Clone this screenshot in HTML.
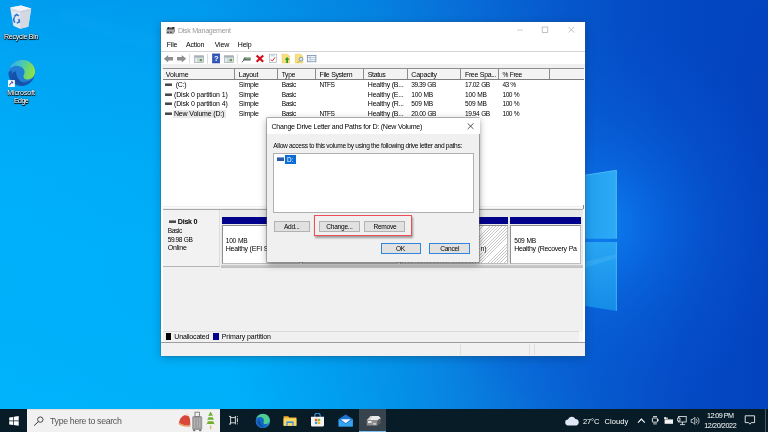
<!DOCTYPE html>
<html><head><meta charset="utf-8"><title>Disk Management</title>
<style>
*{box-sizing:border-box;margin:0;padding:0}
html,body{width:768px;height:432px;overflow:hidden;background:#0e9fe8}
body{position:relative;font-family:"Liberation Sans",sans-serif;font-size:7px;color:#000;letter-spacing:-0.22px;line-height:1}
.abs,.t{position:absolute}
#win,#dlg,#task,.dl{will-change:transform}
#win>*,#dlg>*,#task>*,.dl,.dicon{filter:blur(0.32px)}
.t{white-space:nowrap;line-height:10px;height:10px}
#wall{position:absolute;left:0;top:0;width:768px;height:432px}
/* desktop icons */
.dl{position:absolute;color:#fff;text-align:center;white-space:nowrap;text-shadow:0 0.6px 1px #000,0 0 1.5px rgba(0,0,0,.9),0.5px 0.5px 0.5px rgba(0,0,0,.8);font-size:7.1px;letter-spacing:-0.3px;line-height:9px}
/* main window */
#win{position:absolute;left:161px;top:22px;width:423.5px;height:334.3px;background:#fff;box-shadow:0 0 0 0.5px rgba(60,90,120,.5),0 2px 9px rgba(0,0,0,.22)}
#dlg{position:absolute;left:266.8px;top:118px;width:212.2px;height:143.6px;background:#f0f0f0;box-shadow:0 0 0 0.6px rgba(90,90,90,.7),0 2px 8px rgba(0,0,0,.32),1px 2px 4px rgba(0,0,0,.16)}
.btn{position:absolute;height:11.2px;background:#e1e1e1;border:0.6px solid #b2b2b2;text-align:center;line-height:10px;font-size:6.6px;letter-spacing:-0.25px}
#task{position:absolute;left:0;top:409px;width:768px;height:23px;background:#071c27}
</style></head><body>
<svg id="wall" viewBox="0 0 768 432">
<defs>
<linearGradient id="gb" x1="0" y1="256" x2="768" y2="176" gradientUnits="userSpaceOnUse">
<stop offset="0" stop-color="#00b1fa"/><stop offset="0.28" stop-color="#00adf8"/><stop offset="0.37" stop-color="#02a1f1"/><stop offset="0.5" stop-color="#0590e8"/><stop offset="0.57" stop-color="#0882e1"/><stop offset="0.66" stop-color="#096ed8"/><stop offset="0.76" stop-color="#0759cc"/><stop offset="0.87" stop-color="#0449c4"/><stop offset="1" stop-color="#0441bd"/>
</linearGradient>
<linearGradient id="gv" x1="0" y1="0" x2="0" y2="432" gradientUnits="userSpaceOnUse">
<stop offset="0" stop-color="#0050c8" stop-opacity=".2"/><stop offset="0.15" stop-color="#0050c8" stop-opacity=".11"/><stop offset="0.4" stop-color="#0050c8" stop-opacity=".03"/><stop offset="0.6" stop-color="#0050c8" stop-opacity="0"/>
</linearGradient>
<linearGradient id="gbot" x1="0" y1="300" x2="0" y2="410" gradientUnits="userSpaceOnUse">
<stop offset="0" stop-color="#00c0ff" stop-opacity="0"/><stop offset="1" stop-color="#00c0ff" stop-opacity=".22"/>
</linearGradient>
<linearGradient id="gbm" x1="0" y1="0" x2="420" y2="0" gradientUnits="userSpaceOnUse">
<stop offset="0" stop-color="#fff"/><stop offset="0.55" stop-color="#fff"/><stop offset="1" stop-color="#000"/>
</linearGradient>
<mask id="mbot"><rect width="768" height="432" fill="url(#gbm)"/></mask>
<radialGradient id="glow" cx="598" cy="225" r="200" gradientUnits="userSpaceOnUse">
<stop offset="0" stop-color="#0e84f2" stop-opacity=".95"/><stop offset="0.25" stop-color="#0a70e8" stop-opacity=".72"/><stop offset="0.55" stop-color="#0860dc" stop-opacity=".42"/><stop offset="1" stop-color="#0650d0" stop-opacity="0"/>
</radialGradient>
<linearGradient id="pane" x1="570" y1="0" x2="617" y2="0" gradientUnits="userSpaceOnUse">
<stop offset="0" stop-color="#1a98ee"/><stop offset="1" stop-color="#2eabf5"/>
</linearGradient>
<linearGradient id="pane2" x1="0" y1="242" x2="0" y2="311" gradientUnits="userSpaceOnUse">
<stop offset="0" stop-color="#29a5f4"/><stop offset="1" stop-color="#158ce8"/>
</linearGradient>
</defs>
<rect width="768" height="432" fill="url(#gb)"/>
<rect width="768" height="432" fill="url(#gv)"/>
<rect width="768" height="432" fill="url(#gbot)" mask="url(#mbot)"/>
<polygon points="60,9 175,40 175,60 60,20" fill="#2ab8ff" opacity=".07"/>
<rect width="768" height="432" fill="url(#glow)"/>
<polygon points="560,179 616.7,170 616.7,238.8 560,238.8" fill="url(#pane)"/>
<polygon points="560,242 616.7,242 616.7,311 560,302" fill="url(#pane2)"/>
<path d="M584,175.4 L616.4,170.3 V238.6 M616.4,242 V310.7" stroke="#66ccf9" stroke-width="0.7" fill="none" opacity=".85"/>
<polygon points="584,262 616.7,254 616.7,258 584,268" fill="#5fc4f8" opacity=".25"/>
</svg>

<!-- desktop icons -->
<svg class="abs dicon" style="left:8px;top:4px;width:26px;height:26px" viewBox="0 0 26 26">
<polygon points="2.2,3.4 13,1.6 23.2,4.6 20.3,22.8 12,24.8 5.3,21.8" fill="#e3e7ee"/>
<polygon points="2.2,3.4 13,1.6 23.2,4.6 12.4,7" fill="#f3f4f8"/>
<polygon points="12.4,7 23.2,4.6 20.3,22.8 12,24.8" fill="#d3d8e3"/>
<path d="M4 6 L12.4 8 L22 6" stroke="#c2c8d4" stroke-width="0.6" fill="none"/>
<path d="M6.3 12.6 l2.3-2.2 2.3 1.6 M10.9 14.9 l0.5 3 -2.6 1.2 M6.8 18.6 l-1.3-2.8 1-2.4" stroke="#1f6fd0" stroke-width="1.5" fill="none"/>
</svg>
<div class="dl" style="left:1px;top:32.9px;width:40px">Recycle Bin</div>

<svg class="abs dicon" style="left:6.6px;top:57.7px;width:31px;height:31px" viewBox="0 0 30 30">
<defs>
<linearGradient id="eg1" x1="0" y1="0" x2="1" y2="1"><stop offset="0" stop-color="#2a9fe6"/><stop offset="1" stop-color="#1467c2"/></linearGradient>
<linearGradient id="eg2" x1="0" y1="0.2" x2="1" y2="0.5"><stop offset="0" stop-color="#2fb2ee"/><stop offset="0.4" stop-color="#45c6c0"/><stop offset="0.75" stop-color="#6fd96a"/><stop offset="1" stop-color="#8fe048"/></linearGradient>
</defs>
<circle cx="14.2" cy="14.2" r="12.8" fill="url(#eg1)"/>
<path d="M3 9 C7 1,20 -1,25.5 7.5 C29 13,27 20,20.5 21 C16 21.5,14.5 18,16.5 15.5 C18 13,16 8.5,11 8.5 C7 8.5,4.5 10,3 9Z" fill="url(#eg2)"/>
<path d="M1.6 14 C2.5 8.5,8 6.5,12 8 C15.5 9.3,17.6 12.6,16.5 15.5 C15 18,16 21.5,20.5 21 C23 20.8,25 19.5,26 18.5 C24 24,19 27,14.2 27 C7 27,1 21,1.6 14Z" fill="#207ed4"/>
<path d="M8.5 13 C9 17,11 22,17 25.5 C12 26.5,6.5 23,5 18 C4.4 15.5,6 12.5,8.5 13Z" fill="#1452ad"/>
<path d="M1.6 14 C1 21,7 27,14.2 27 C19 27,24 24,26 18.5 C23 22.5,17.5 24.5,13 23 C7.5 21.5,4 17,4.6 12 C3 12.6,1.8 13,1.6 14Z" fill="#154fa8" opacity=".85"/>
<rect x="1" y="21.4" width="6.6" height="6.6" fill="#fff"/>
<path d="M2.6 26.6 C2.8 24.4,4 23.6,5.4 23.6 M4.2 22.6 L5.8 23.6 L4.6 25" stroke="#1a3f9a" stroke-width="0.9" fill="none"/>
</svg>
<div class="dl" style="left:0.6px;top:89.3px;width:40px;letter-spacing:-0.12px">Microsoft</div>
<div class="dl" style="left:0.6px;top:97.1px;width:40px;letter-spacing:-0.6px">Edge</div>

<div id="win">
<!-- title bar -->
<svg class="abs" style="left:4.6px;top:4.4px;width:9px;height:9px" viewBox="0 0 9 9">
<path d="M1.8 0.9 h6.8 l-0.6 2 h-7.2z" fill="#2b2b2b"/><path d="M0.8 2.9 h7.2 l-0.4 1.6 h-7.4z" fill="#7d7d7d"/><path d="M0.4 4.5 h7.4 v3.4 h-7.4z" fill="#a9a9a9"/><rect x="1.2" y="5.6" width="1.6" height="1.4" fill="#3a3a3a"/><rect x="4.2" y="5.6" width="1.6" height="1.4" fill="#3a3a3a"/><rect x="3" y="1.4" width="3.4" height="0.8" fill="#d8d8d8"/><path d="M7.8 4.5 l0.8-3.2 v4 l-0.8 2.6z" fill="#444"/>
</svg>
<div class="t" style="left:17px;top:3.8px;color:#9a9a9a;font-size:7.1px;letter-spacing:-0.3px">Disk Management</div>
<svg class="abs" style="left:350px;top:0;width:72px;height:18px" viewBox="0 0 72 18">
<path d="M6 8.1 h6" stroke="#b9b9b9" stroke-width="0.7"/>
<rect x="31.2" y="5" width="5.6" height="5.6" fill="none" stroke="#a8a8a8" stroke-width="0.7"/>
<path d="M57.5 4.9 l5.6 5.6 M63.1 4.9 l-5.6 5.6" stroke="#a8a8a8" stroke-width="0.7"/>
</svg>
<!-- menu -->
<div class="t" style="left:5.8px;top:18.2px">File</div>
<div class="t" style="left:25px;top:18.2px">Action</div>
<div class="t" style="left:53.8px;top:18.2px">View</div>
<div class="t" style="left:76.8px;top:18.2px">Help</div>
<div class="abs" style="left:0;top:29.2px;width:423.5px;height:0.7px;background:#d4d4d4"></div>
<!-- toolbar -->
<svg class="abs" style="left:0;top:30px;width:190px;height:13px" viewBox="0 0 190 13">
<path d="M2.8 6.8 l4.4-3.8 v2.1 h4.8 v3.4 h-4.8 v2.1z" fill="#8e8e8e"/>
<path d="M25.2 6.8 l-4.4-3.8 v2.1 h-4.8 v3.4 h4.8 v2.1z" fill="#8e8e8e"/>
<path d="M28.6 2 v9.6" stroke="#c4c4c4" stroke-width="0.6"/>
<rect x="33.6" y="3.8" width="9" height="6.6" fill="#e4ecee" stroke="#8e9ba0" stroke-width="0.6"/><rect x="33.6" y="3.8" width="9" height="1.8" fill="#a3b0b5"/><path d="M37 5.6 v4.8" stroke="#8e9ba0" stroke-width="0.5"/><rect x="38.6" y="6.8" width="2.6" height="2.6" fill="#6a9a58"/>
<path d="M46.5 2 v9.6" stroke="#c4c4c4" stroke-width="0.6"/>
<rect x="51.4" y="1.9" width="7.4" height="9.1" fill="#3458bd" stroke="#203e92" stroke-width="0.5"/><text x="53" y="9.3" font-family="Liberation Sans,sans-serif" font-weight="bold" font-size="7.6" fill="#fff">?</text>
<rect x="63.6" y="3.8" width="9" height="6.6" fill="#e4ecee" stroke="#8e9ba0" stroke-width="0.6"/><rect x="63.6" y="3.8" width="9" height="1.8" fill="#a3b0b5"/><path d="M67 5.6 v4.8" stroke="#8e9ba0" stroke-width="0.5"/><rect x="68.6" y="6.8" width="2.6" height="2.6" fill="#6a9a58"/>
<path d="M76.3 2 v9.6" stroke="#c4c4c4" stroke-width="0.6"/>
<path d="M81 10.4 l2.6-3.4" stroke="#59666b" stroke-width="1"/><path d="M83 5.6 h6.6 v2.8 h-7.4z" fill="#58686e"/><path d="M84.4 6.6 h4.6" stroke="#7dbb5a" stroke-width="1.1"/>
<path d="M95.6 3.4 l6.6 6.4 M102.2 3.4 l-6.6 6.4" stroke="#cf0f1a" stroke-width="2.1"/>
<rect x="108.3" y="2.2" width="7" height="8.4" fill="#fff" stroke="#9aa6b2" stroke-width="0.6"/><path d="M109.8 7.4 l1.5 1.7 l2.8-3.9" stroke="#d23a2a" stroke-width="1" fill="none"/><path d="M109.8 3.8 h3.6" stroke="#7fa0c8" stroke-width="0.6"/>
<path d="M121 2.2 h5.6 l2 2 v6.8 h-7.6z" fill="#f7e07c" stroke="#e0c45a" stroke-width="0.5"/><path d="M125.2 11 v-3.2 h-1.6 l2.5-2.8 l2.5 2.8 h-1.6 v3.2z" fill="#2f9a2c"/>
<path d="M134.2 2.2 h5.6 l2 2 v6.8 h-7.6z" fill="#f7e07c" stroke="#e0c45a" stroke-width="0.5"/><circle cx="140" cy="7.2" r="1.9" fill="#d3e6f6" stroke="#6283a8" stroke-width="0.7"/><path d="M138.7 8.7 l-2 2.2" stroke="#b89a5a" stroke-width="0.9"/>
<rect x="146.3" y="3.5" width="8.6" height="6.3" fill="#f2f6fa" stroke="#5f7f9f" stroke-width="0.7"/><path d="M149 3.5 v6.3 M146.3 5.5 h8.6 M149 7.6 h5.9" stroke="#7f9fbf" stroke-width="0.5"/>
</svg>
<div class="abs" style="left:0;top:42.4px;width:423.5px;height:4.2px;background:#f0f0f0"></div>
<!-- table header -->
<div class="abs" id="thead" style="left:1.5px;top:46.4px;width:421px;height:11.3px;background:#f3f3f3;border-top:0.8px solid #8f8f8f;border-bottom:0.9px solid #7e7e7e"></div>
<div class="abs" style="left:72.8px;top:47.2px;width:1px;height:9.8px;background:#8c8c8c"></div>
<div class="abs" style="left:115.8px;top:47.2px;width:1px;height:9.8px;background:#8c8c8c"></div>
<div class="abs" style="left:154.0px;top:47.2px;width:1px;height:9.8px;background:#8c8c8c"></div>
<div class="abs" style="left:201.8px;top:47.2px;width:1px;height:9.8px;background:#8c8c8c"></div>
<div class="abs" style="left:245.5px;top:47.2px;width:1px;height:9.8px;background:#8c8c8c"></div>
<div class="abs" style="left:299.3px;top:47.2px;width:1px;height:9.8px;background:#8c8c8c"></div>
<div class="abs" style="left:336.8px;top:47.2px;width:1px;height:9.8px;background:#8c8c8c"></div>
<div class="abs" style="left:387.7px;top:47.2px;width:1px;height:9.8px;background:#8c8c8c"></div>
<div class="t" style="left:4.8px;top:47.6px;letter-spacing:-0.091px;word-spacing:0.091px;">Volume</div>
<div class="t" style="left:77.8px;top:47.6px;letter-spacing:-0.286px;word-spacing:0.286px;">Layout</div>
<div class="t" style="left:120.7px;top:47.6px;font-size:6.6px;letter-spacing:-0.227px;word-spacing:0.227px;">Type</div>
<div class="t" style="left:158.5px;top:47.6px;letter-spacing:-0.396px;word-spacing:0.396px;">File System</div>
<div class="t" style="left:206.8px;top:47.6px;letter-spacing:-0.374px;word-spacing:0.374px;">Status</div>
<div class="t" style="left:250.3px;top:47.6px;">Capacity</div>
<div class="t" style="left:304.0px;top:47.6px;letter-spacing:-0.373px;word-spacing:0.373px;">Free Spa...</div>
<div class="t" style="left:341.5px;top:47.6px;font-size:6.6px;letter-spacing:-0.395px;word-spacing:0.395px;">% Free</div>
<div class="abs" style="left:4.2px;top:61.0px;width:7px;height:3px;background:#474747;border-top:0.8px solid #9a9a9a;border-radius:0.4px"></div>
<div class="t" style="left:14.7px;top:57.8px;">(C:)</div>
<div class="t" style="left:77.8px;top:57.8px;letter-spacing:-0.266px;word-spacing:0.266px;">Simple</div>
<div class="t" style="left:120.7px;top:57.8px;font-size:6.6px;letter-spacing:-0.348px;word-spacing:0.348px;">Basic</div>
<div class="t" style="left:158.5px;top:57.8px;font-size:6.6px;letter-spacing:-0.583px;word-spacing:0.583px;">NTFS</div>
<div class="t" style="left:206.8px;top:57.8px;">Healthy (B...</div>
<div class="t" style="left:250.3px;top:57.8px;font-size:6.6px;letter-spacing:-0.469px;word-spacing:0.469px;">39.39 GB</div>
<div class="t" style="left:304.0px;top:57.8px;font-size:6.6px;letter-spacing:-0.441px;word-spacing:0.441px;">17.02 GB</div>
<div class="t" style="left:341.5px;top:57.8px;font-size:6.6px;letter-spacing:-0.748px;word-spacing:0.748px;">43 %</div>
<div class="abs" style="left:4.2px;top:71.0px;width:7px;height:3px;background:#474747;border-top:0.8px solid #9a9a9a;border-radius:0.4px"></div>
<div class="t" style="left:13.0px;top:67.6px;letter-spacing:-0.188px;word-spacing:0.188px;">(Disk 0 partition 1)</div>
<div class="t" style="left:77.8px;top:67.6px;letter-spacing:-0.266px;word-spacing:0.266px;">Simple</div>
<div class="t" style="left:120.7px;top:67.6px;font-size:6.6px;letter-spacing:-0.348px;word-spacing:0.348px;">Basic</div>
<div class="t" style="left:206.8px;top:67.6px;">Healthy (E...</div>
<div class="t" style="left:250.3px;top:67.6px;font-size:6.6px;letter-spacing:-0.209px;word-spacing:0.209px;">100 MB</div>
<div class="t" style="left:304.0px;top:67.6px;font-size:6.6px;letter-spacing:-0.209px;word-spacing:0.209px;">100 MB</div>
<div class="t" style="left:341.5px;top:67.6px;font-size:6.6px;letter-spacing:-0.528px;word-spacing:0.528px;">100 %</div>
<div class="abs" style="left:4.2px;top:80.0px;width:7px;height:3px;background:#474747;border-top:0.8px solid #9a9a9a;border-radius:0.4px"></div>
<div class="t" style="left:13.0px;top:77.1px;letter-spacing:-0.188px;word-spacing:0.188px;">(Disk 0 partition 4)</div>
<div class="t" style="left:77.8px;top:77.1px;letter-spacing:-0.266px;word-spacing:0.266px;">Simple</div>
<div class="t" style="left:120.7px;top:77.1px;font-size:6.6px;letter-spacing:-0.348px;word-spacing:0.348px;">Basic</div>
<div class="t" style="left:206.8px;top:77.1px;">Healthy (R...</div>
<div class="t" style="left:250.3px;top:77.1px;font-size:6.6px;letter-spacing:-0.209px;word-spacing:0.209px;">509 MB</div>
<div class="t" style="left:304.0px;top:77.1px;font-size:6.6px;letter-spacing:-0.209px;word-spacing:0.209px;">509 MB</div>
<div class="t" style="left:341.5px;top:77.1px;font-size:6.6px;letter-spacing:-0.528px;word-spacing:0.528px;">100 %</div>
<div class="abs" style="left:11.7px;top:88.0px;width:53.5px;height:7.6px;background:#e9e9e9"></div>
<div class="abs" style="left:4.2px;top:90.0px;width:7px;height:3px;background:#474747;border-top:0.8px solid #9a9a9a;border-radius:0.4px"></div>
<div class="t" style="left:13.0px;top:86.6px;letter-spacing:-0.208px;word-spacing:0.208px;">New Volume (D:)</div>
<div class="t" style="left:77.8px;top:86.6px;letter-spacing:-0.266px;word-spacing:0.266px;">Simple</div>
<div class="t" style="left:120.7px;top:86.6px;font-size:6.6px;letter-spacing:-0.348px;word-spacing:0.348px;">Basic</div>
<div class="t" style="left:158.5px;top:86.6px;font-size:6.6px;letter-spacing:-0.583px;word-spacing:0.583px;">NTFS</div>
<div class="t" style="left:206.8px;top:86.6px;">Healthy (B...</div>
<div class="t" style="left:250.3px;top:86.6px;font-size:6.6px;letter-spacing:-0.441px;word-spacing:0.441px;">20.00 GB</div>
<div class="t" style="left:304.0px;top:86.6px;font-size:6.6px;letter-spacing:-0.441px;word-spacing:0.441px;">19.94 GB</div>
<div class="t" style="left:341.5px;top:86.6px;font-size:6.6px;letter-spacing:-0.528px;word-spacing:0.528px;">100 %</div>
<div class="abs" style="left:1.5px;top:183.8px;width:420.6px;height:136.8px;background:#f0f0f0"></div>
<div class="abs" style="left:1.5px;top:186.6px;width:420.6px;height:1.3px;background:#a6a6a6"></div>
<div class="abs" style="left:1.5px;top:185.0px;width:420.6px;height:1.3px;background:#fbfbfb"></div>
<div class="abs" style="left:422.2px;top:183.0px;width:0.8px;height:4px;background:#8a8a8a"></div>
<!-- disk label -->
<div class="abs" style="left:1.6px;top:188.0px;width:57.4px;height:56.6px;background:#f2f2f2;border-right:0.7px solid #dcdcdc;border-bottom:0.8px solid #b4b4b4"></div>
<div class="abs" style="left:8.3px;top:198.4px;width:6.6px;height:2.4px;background:#4c4c4c;border-top:0.7px solid #8d8d8d"></div>
<div class="t" style="left:16.7px;top:194.9px;letter-spacing:-0.25px;font-size:7.2px"><b>Disk 0</b></div>
<div class="t" style="left:6.7px;top:203.5px;font-size:6.6px;letter-spacing:-0.348px;word-spacing:0.348px;">Basic</div>
<div class="t" style="left:6.7px;top:212.5px;font-size:6.6px;letter-spacing:-0.455px;word-spacing:0.455px;">59.98 GB</div>
<div class="t" style="left:6.7px;top:220.9px;">Online</div>
<div class="abs" style="left:59.6px;top:188.0px;width:362.4px;height:58.0px;background:#e9e9e9"></div>
<div class="abs" style="left:59.6px;top:242.8px;width:362.4px;height:3px;background:linear-gradient(#cfcfcf,#bdbdbd)"></div>
<div class="abs" style="left:60.6px;top:194.8px;width:78.4px;height:6.8px;background:#00008b"></div>
<div class="abs" style="left:60.6px;top:202.6px;width:78.4px;height:39.8px;background:#fff;border:0.8px solid #bdbdbd;border-left:0.8px solid #909090;border-top:1.1px solid #8c8c8c"></div>
<div class="abs" style="left:140.6px;top:194.8px;width:96.4px;height:6.8px;background:#00008b"></div>
<div class="abs" style="left:140.6px;top:202.6px;width:96.4px;height:39.8px;background:#fff;border:0.8px solid #bdbdbd;border-left:0.8px solid #909090;border-top:1.1px solid #8c8c8c"></div>
<div class="abs" style="left:238.6px;top:194.8px;width:108.4px;height:6.8px;background:#00008b"></div>
<div class="abs" style="left:238.6px;top:202.6px;width:108.4px;height:39.8px;background:repeating-linear-gradient(135deg,#fff 0,#fff 1.65px,#c6c6c6 1.65px,#c6c6c6 2.25px);border:0.8px solid #bdbdbd;border-left:0.8px solid #909090;border-top:1.1px solid #8c8c8c"></div>
<div class="abs" style="left:349.0px;top:194.8px;width:70.8px;height:6.8px;background:#00008b"></div>
<div class="abs" style="left:349.0px;top:202.6px;width:70.8px;height:39.8px;background:#fff;border:0.8px solid #bdbdbd;border-left:0.8px solid #909090;border-top:1.1px solid #8c8c8c"></div>
<div class="t" style="left:64.7px;top:213.8px;font-size:6.6px;letter-spacing:-0.209px;word-spacing:0.209px;">100 MB</div>
<div class="t" style="left:64.7px;top:221.5px;width:70px;overflow:hidden">Healthy (EFI System Partition)</div>
<div class="t" style="left:353.2px;top:213.5px;font-size:6.6px;letter-spacing:-0.209px;word-spacing:0.209px;">509 MB</div>
<div class="t" style="left:353.2px;top:221.5px;letter-spacing:-0.310px;word-spacing:0.310px;">Healthy (Recovery Pa</div>
<div class="t" style="left:319.4px;top:221.6px;background:rgba(255,255,255,.85);width:5.6px;height:7px;line-height:7px;margin-top:1.5px;padding-left:0.2px">n)</div>
<div class="abs" style="left:1.5px;top:308.6px;width:420.6px;height:0.7px;background:#dadada"></div>
<div class="abs" style="left:4.7px;top:311.4px;width:5.6px;height:6.6px;background:#000"></div>
<div class="abs" style="left:52.2px;top:311.4px;width:5.6px;height:6.6px;background:#00008b"></div>
<div class="t" style="left:13.3px;top:309.8px;letter-spacing:-0.179px;word-spacing:0.179px;">Unallocated</div>
<div class="t" style="left:60.8px;top:309.8px;letter-spacing:-0.122px;word-spacing:0.122px;">Primary partition</div>
<div class="abs" style="left:0;top:320.2px;width:423.5px;height:0.9px;background:#9c9c9c"></div>
<div class="abs" style="left:0;top:321.1px;width:423.5px;height:13.2px;background:#f1f1f1"></div>
<div class="abs" style="left:299.0px;top:322.0px;width:0.6px;height:11px;background:#e0e0e0"></div>
<div class="abs" style="left:368.0px;top:322.0px;width:0.6px;height:11px;background:#dedede"></div>
<div class="abs" style="left:373.0px;top:322.0px;width:0.6px;height:11px;background:#dedede"></div>
<div class="abs" style="left:418.0px;top:309.0px;width:4.4px;height:11.2px;background:#f7f7f7"></div>
</div>
<div id="dlg">
<div class="abs" style="left:0;top:0;width:212.6px;height:15.8px;background:#fff"></div>
<div class="t" style="left:4.5px;top:3.9px;font-size:7.1px;letter-spacing:-0.257px">Change Drive Letter and Paths for D: (New Volume)</div>
<svg class="abs" style="left:199px;top:4px;width:9px;height:9px" viewBox="0 0 9 9"><path d="M1.7 1.4 l5.8 5.6 M7.5 1.4 l-5.8 5.6" stroke="#222" stroke-width="0.75"/></svg>
<div class="t" style="left:6.2px;top:22.6px;font-size:6.6px;letter-spacing:-0.296px">Allow access to this volume by using the following drive letter and paths:</div>
<div class="abs" style="left:5.7px;top:35px;width:201px;height:59.8px;background:#fff;border:0.7px solid #b0b0b0"></div>
<div class="abs" style="left:9.9px;top:39.4px;width:7.4px;height:3.3px;background:#2c5aa8;border-top:1px solid #7da2d8"></div>
<div class="abs" style="left:18.2px;top:37.2px;width:10.5px;height:8.6px;background:#0a6ed6"></div>
<div class="t" style="left:20px;top:36.5px;color:#fff;font-size:6.4px">D:</div>
<div class="btn" style="left:6.5px;top:102.7px;width:36.5px">Add...</div>
<div class="abs" style="left:47.4px;top:97px;width:97.8px;height:21.2px;border:1.6px solid #ee4c56;box-shadow:1px 1.5px 2px rgba(0,0,0,.35)"></div>
<div class="btn" style="left:51.9px;top:102.7px;width:41px">Change...</div>
<div class="btn" style="left:97.4px;top:102.7px;width:41.1px">Remove</div>
<div class="btn" style="left:113.5px;top:124.7px;width:40px;border:0.9px solid #2f86dc">OK</div>
<div class="btn" style="left:162.4px;top:124.7px;width:40.5px;border:0.9px solid #2f86dc">Cancel</div>
</div>
<div id="task">
<!-- start -->
<svg class="abs" style="left:8.6px;top:6.8px;width:10px;height:10px" viewBox="0 0 10 10">
<path d="M0.2 1.5 L4.2 0.9 V4.6 H0.2Z M4.9 0.8 L9.7 0.1 V4.6 H4.9Z M0.2 5.3 H4.2 V9 L0.2 8.4Z M4.9 5.3 H9.7 V9.8 L4.9 9.1Z" fill="#fff"/>
</svg>
<!-- search box -->
<div class="abs" style="left:27px;top:0;width:193.4px;height:23px;background:#f1f1f1;border-top:0.6px solid #e4dede"></div>
<svg class="abs" style="left:32px;top:6px;width:13px;height:13px" viewBox="0 0 13 13"><circle cx="8.3" cy="4.6" r="2.7" fill="none" stroke="#333" stroke-width="0.9"/><path d="M6.4 6.6 L2.2 10.6" stroke="#333" stroke-width="1"/></svg>
<div class="t" style="left:50px;top:6.6px;font-size:8.8px;letter-spacing:-0.33px;color:#555;line-height:11px;height:11px">Type here to search</div>
<!-- search highlight art -->
<svg class="abs" style="left:177px;top:1px;width:42px;height:22px" viewBox="0 0 42 22">
<path d="M2 12.8 C2.4 8,6.4 4.6,9.8 5 C12.4 5.4,13.6 9,13.2 15.2 C9.6 16,5 15,2 12.8Z" fill="#d9473b"/>
<path d="M1.8 12.4 C5 15,9.6 15.8,13.3 14.6 L13.2 16.4 C9.4 17.4,4.6 16.4,1.6 14Z" fill="#e39a62"/>
<circle cx="10" cy="4.8" r="1.2" fill="#f0d9c8"/>
<rect x="15.2" y="6" width="10" height="14" rx="1.6" fill="#9b9b9b"/><rect x="18" y="2.2" width="4.4" height="4.4" fill="none" stroke="#7c7c7c" stroke-width="0.9"/><path d="M17.6 8 v10 M20.2 8 v10 M22.8 8 v10" stroke="#bdbdbd" stroke-width="0.8"/><rect x="16.2" y="19.6" width="2" height="1.6" fill="#666"/><rect x="22.2" y="19.6" width="2" height="1.6" fill="#666"/>
<path d="M33.6 1.4 L36.4 6.4 H35.4 L37.2 10.4 H36 L37.8 15 H29.4 L31.2 10.4 H30 L31.8 6.4 H30.8Z" fill="#6fae2c"/><path d="M31 6.4 h5.2 M30.2 10.4 h6.8 M29.6 14.8 h8" stroke="#eef3ee" stroke-width="1.5"/><rect x="32.9" y="15.4" width="1.5" height="3.8" fill="#dcc070"/>
</svg>
<!-- task view -->
<svg class="abs" style="left:228px;top:6px;width:12px;height:11px" viewBox="0 0 12 11">
<path d="M1 1.4 h1.6 M1 9 h1.6 M2.6 1 v8.4 M7.4 1 v8.4 M2.6 2.6 h4.8 M2.6 7.8 h4.8 M9.4 3.2 v4 M9.4 1.2 v0.9 M9.4 8.4 v0.9" stroke="#e8e8e8" stroke-width="0.9" fill="none"/>
</svg>
<!-- edge -->
<svg class="abs" style="left:255px;top:4px;width:16px;height:16px" viewBox="0 0 30 30">
<circle cx="14.8" cy="14.8" r="13.4" fill="#2aa7e6"/>
<path d="M3 9 C7 1,20 -1,25.5 7.5 C29 13,27 20,20.5 21 C16 21.5,14.5 18,16.5 15.5 C18 13,16 8.5,11 8.5 C7 8.5,4.5 10,3 9Z" fill="#4fd08a"/>
<path d="M1.6 14 C2.5 8.5,8 6.5,12 8 C15.5 9.3,17.6 12.6,16.5 15.5 C15 18,16 21.5,20.5 21 C23 20.8,25 19.5,26 18.5 C24 24,19 28,14.2 28 C7 28,1 21,1.6 14Z" fill="#1767c4"/>
<path d="M8.5 13 C9 17,11 22,17 26.5 C12 27.5,6.5 23,5 18 C4.4 15.5,6 12.5,8.5 13Z" fill="#0f4fa6"/>
</svg>
<!-- explorer -->
<svg class="abs" style="left:283px;top:6px;width:14px;height:12px" viewBox="0 0 14 12">
<path d="M0.6 1.2 h4.6 l1 1.2 h7.2 v8.4 h-12.8z" fill="#f2b32a"/><path d="M0.6 3.6 h12.8 v7.2 h-12.8z" fill="#fbd768"/><rect x="3.4" y="6.4" width="7.2" height="4.4" fill="#3a8fd8"/><rect x="4.6" y="8" width="4.8" height="2.8" fill="#fbd768"/>
</svg>
<!-- store -->
<svg class="abs" style="left:310px;top:4px;width:15px;height:15px" viewBox="0 0 15 15">
<path d="M4.8 4 v-1.2 a2.7 2.7 0 0 1 5.4 0 v1.2" fill="none" stroke="#2f8fe0" stroke-width="1.1"/>
<path d="M1 3.8 h13 v8.4 a1.4 1.4 0 0 1 -1.4 1.4 h-10.2 a1.4 1.4 0 0 1 -1.4 -1.4z" fill="#f3f3f3"/>
<rect x="4.9" y="5.8" width="2.4" height="2.4" fill="#f0552c"/><rect x="7.8" y="5.8" width="2.4" height="2.4" fill="#86bb2a"/><rect x="4.9" y="8.7" width="2.4" height="2.4" fill="#2ba4ea"/><rect x="7.8" y="8.7" width="2.4" height="2.4" fill="#f8b81c"/>
</svg>
<!-- mail -->
<svg class="abs" style="left:337.6px;top:5px;width:15.4px;height:13.4px" viewBox="0 0 15.4 13.4">
<path d="M0.6 5 L7.7 0.4 L14.8 5 V12.6 H0.6Z" fill="#1b74cf"/><path d="M2.6 5.2 H12.8 L7.7 9.2Z" fill="#f2f6fa"/><path d="M0.6 5.2 L7.7 10 L14.8 5.2 V12.6 H0.6Z" fill="#35a5ee"/>
</svg>
<!-- active app -->
<div class="abs" style="left:359.4px;top:0;width:26.8px;height:23px;background:#37434d"></div>
<div class="abs" style="left:359.4px;top:21.6px;width:26.8px;height:1.4px;background:#7cbdf0"></div>
<svg class="abs" style="left:366px;top:6.4px;width:15.4px;height:11.6px" viewBox="0 0 15.4 11.6">
<path d="M4.6 1 h8 l2.4 2.2 l-2 2.6 h-9.6z" fill="#e9e9e9"/><path d="M0.8 5 h10.8 v5.6 h-10.8z" fill="#8f8f8f"/><path d="M11.6 5 l3.2-2 v5 l-3.2 2.6z" fill="#5b5b5b"/><rect x="2" y="6.2" width="3.6" height="1.6" fill="#fff"/><rect x="7" y="8.2" width="3" height="1.4" fill="#d7d7d7"/><path d="M0.8 5 l3.8-4 h1.6 l-2 4z" fill="#cfcfcf"/>
</svg>
<!-- weather -->
<svg class="abs" style="left:564.6px;top:6.6px;width:14.6px;height:10px" viewBox="0 0 14.6 10">
<path d="M3.2 9.4 a2.9 2.9 0 0 1 -0.2 -5.8 a4 4 0 0 1 7.4 -0.6 a3.3 3.3 0 0 1 1.2 6.4z" fill="#dfe6f5"/>
</svg>
<div class="t" style="left:583px;top:7.7px;color:#fff;font-size:7.5px;letter-spacing:-0.15px">27°C</div>
<div class="t" style="left:604.6px;top:7.7px;color:#fff;font-size:7.5px;letter-spacing:0.05px">Cloudy</div>
<svg class="abs" style="left:636px;top:4px;width:66px;height:16px" viewBox="0 0 66 16">
<path d="M2 9.7 l3.4-3.6 l3.4 3.6" stroke="#fff" stroke-width="1.05" fill="none"/>
<rect x="16.4" y="5" width="5" height="4.2" rx="0.6" fill="none" stroke="#f2f2f2" stroke-width="0.9"/><path d="M17 3.5 h4 M17.2 10.9 h3.6" stroke="#f2f2f2" stroke-width="0.8"/><rect x="21.2" y="6.2" width="1.4" height="2" fill="#f2f2f2"/>
<rect x="28.6" y="6.4" width="8.4" height="4.4" fill="#f2f2f2"/><path d="M28.4 5.2 h3.6" stroke="#f2f2f2" stroke-width="1"/><circle cx="29.2" cy="5.2" r="1.1" fill="#f2f2f2"/>
<rect x="42.6" y="3.4" width="7.6" height="5.6" fill="none" stroke="#f2f2f2" stroke-width="0.8"/><path d="M44 11.6 h5 M46.4 9 v2.6 M41.6 5 h2.4 v3 h-2.4z" stroke="#f2f2f2" stroke-width="0.8" fill="#0a1b27"/>
<path d="M55.2 6.4 h1.6 l2-2 v7 l-2-2 h-1.6z" fill="none" stroke="#f2f2f2" stroke-width="0.75"/><path d="M60.2 5.8 a3 3 0 0 1 0 4.2 M61.6 4.4 a5 5 0 0 1 0 7" stroke="#f2f2f2" stroke-width="0.7" fill="none"/>
</svg>
<div class="t" style="left:700px;top:1.6px;width:40.5px;text-align:center;color:#fff;font-size:7.2px;letter-spacing:-0.52px">12:09 PM</div>
<div class="t" style="left:700px;top:11.6px;width:40.5px;text-align:center;color:#fff;font-size:7.2px;letter-spacing:-0.4px">12/20/2022</div>
<svg class="abs" style="left:744px;top:6.4px;width:12px;height:11px" viewBox="0 0 12 11"><path d="M1.2 0.8 h9.4 v6.8 h-3.4 l-1.3 1.6 l-1.3-1.6 h-3.4z" fill="none" stroke="#f2f2f2" stroke-width="0.9"/></svg>
<div class="abs" style="left:764.8px;top:0;width:0.6px;height:23px;background:#4a5660"></div>
</div>
</body></html>
